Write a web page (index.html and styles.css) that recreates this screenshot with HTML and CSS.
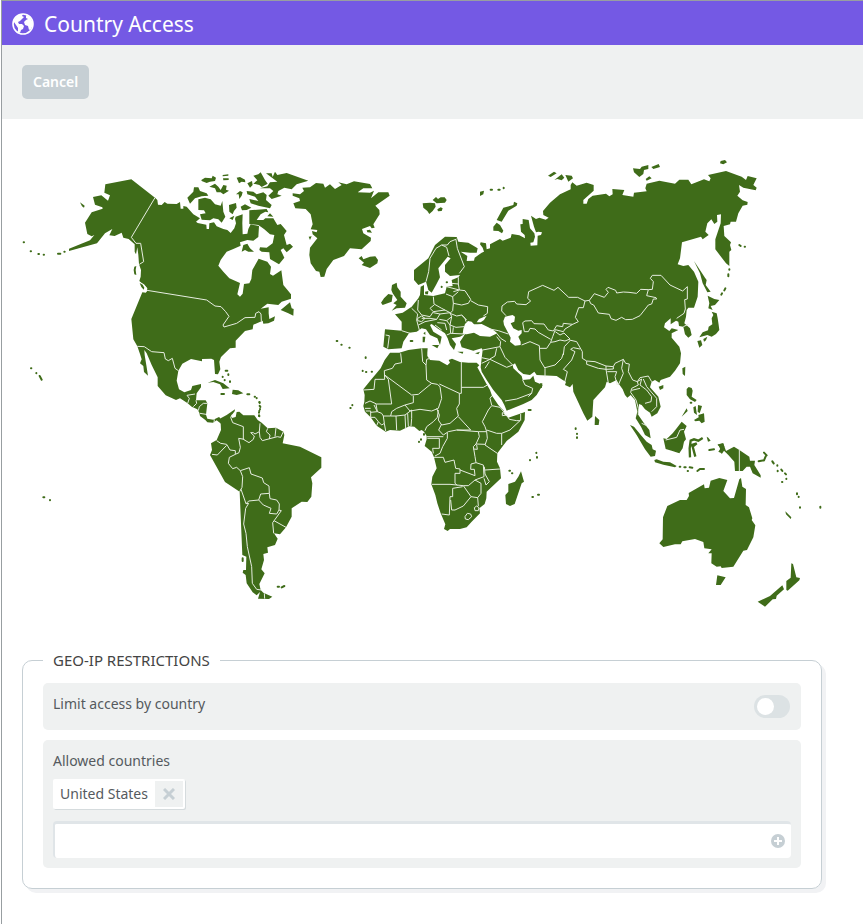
FILE: index.html
```html
<!DOCTYPE html>
<html lang="en">
<head>
    <meta charset="UTF-8">
    <meta name="viewport" content="width=device-width, initial-scale=1.0">
    <title>Country Access</title>
    <link rel="stylesheet" href="styles.css">
</head>
<body>

<div class="page">
    <header class="title-bar">
        <svg class="globe" viewBox="0 0 22 22" aria-hidden="true">
            <circle cx="11" cy="11" r="10" fill="none" stroke="#fff" stroke-width="1.6"/>
            <path d="M2 7 6 2 11 1 10 3 12 4 10 6 8 8 6 9 7 11 10 11 12 13 11 16 9 17 8 20 6 19 6 15 4 12 2 9Z" fill="#fff"/>
            <path d="M14 2 18 4 20 8 21 12 19 16 17 17 16 13 13 12 12 9 14 7 16 6 14 5Z" fill="#fff"/>
        </svg>
        <h1>Country Access</h1>
    </header>

    <div class="toolbar">
        <button type="button" class="cancel-btn">Cancel</button>
    </div>

    <main>
        <svg class="map" viewBox="66 357 2400 1560" role="img" aria-label="World map">
            <!-- North America -->
            <g transform="translate(60 465)">
                <path d="M147 281 210 256 223 240 215 244 202 237 195 203 215 172 248 161 247 157 225 149 219 126 244 121 264 137 270 121 253 113 256 88 334 73 405 128 412 135 414 149 425 150 434 141 442 146 470 147 480 141 482 161 490 161 490 153 500 155 520 178 540 190 528 200 533 204 559 209 560 222 567 222 568 205 582 202 590 214 610 222 622 225 632 234 643 220 648 205 645 192 647 185 668 178 667 205 668 238 682 236 685 222 692 208 717 213 715 246 700 257 682 255 660 262 662 272 640 282 620 290 602 315 595 332 610 350 628 370 660 384 652 418 660 425 668 416 672 387 688 385 694 372 697 345 716 311 742 320 753 335 750 357 759 362 784 346 790 390 813 418 813 431 785 440 775 450 742 446 722 461 746 457 746 475 748 492 765 484 762 497 745 505 730 506 728 497 700 509 698 523 675 528 647 557 647 578 630 580 603 606 598 620 601 643 594 658 585 657 584 643 582 615 574 611 546 612 546 619 513 612 487 626 475 647 470 677 477 703 493 712 513 705 517 693 543 687 543 697 530 715 528 736 557 736 562 745 558 779 562 791 580 794 597 786 606 794 603 806 590 796 579 803 562 802 556 795 540 783 538 773 532 763 515 755 503 745 480 730 468 735 437 721 413 693 413 667 395 630 380 595 373 585 374 600 380 637 384 662 372 651 370 633 360 625 365 613 360 597 352 574 340 553 334 492 367 412 378 413 381 400 372 391 358 378 362 365 363 345 357 327 355 300 352 277 348 298 344 290 344 268 326 252 310 248 305 233 284 243 268 241 277 222 255 235 231 265 147 288Z"/>
                <path class="borders" d="M405 128 334 247 348 265 362 265 371 320 358 328M381 406 560 435 585 453 603 455 617 470 627 484 609 510 612 516 650 505 675 488 705 487 707 475 717 470 723 477 724 498M352 574 373 575 395 590 432 593 436 612 445 617 457 610 465 640 475 647M503 745 508 730 501 721 525 717M520 755 530 745 528 736M535 767 538 755 550 745 562 745M540 775 558 778M583 793 582 803"/>
                <path class="sea" d="M358 380 372 388 382 400 380 411 374 410 372 398 360 387Z"/>
                <path d="M343 335 349 333 347 345 349 360 343 358 341 345ZM180 142 194 152 192 158 186 154ZM359 384 368 389 373 398 371 404 364 396Z"/>
                <path class="islets" d="M11 262h1M32 289h1M55 297h2M71 299h1M114 296h7M133 290h1"/>
            </g>
            <!-- Arctic archipelago, Greenland, Iceland -->
            <g transform="translate(570 465)">
                <path d="M178 166 230 162 235 172 226 170 212 178 200 195 220 195 226 190 250 190 262 210 272 207 290 228 282 240 290 270 300 266 309 275 290 292 280 280 272 285 283 308 267 328 240 312 238 292 215 290 208 285 210 277 230 278 248 265 253 240 240 238 222 222 205 210 178 207Z"/>
                <path d="M25 133 45 128 62 133 75 148 92 152 97 138 100 170 106 185 95 203 85 193 70 190 60 196 35 194 30 178 47 175 42 166 25 165ZM-8 128 10 110 12 97 25 97 30 108 50 115 55 122 35 124 15 130 0 146ZM34 75 45 68 65 70 68 62 78 68 75 78 60 80 50 84 35 78ZM58 95 75 86 85 95 92 105 100 90 110 92 108 104 117 107 100 118 92 112 80 112 75 100ZM98 60 115 58 115 62 98 64ZM99 70 116 70 116 75 100 76ZM140 68 150 66 165 74 166 82 155 80 147 85ZM117 150 138 144 140 158 132 168 128 178 118 170ZM152 155 165 148 184 158 170 165 156 166ZM138 118 150 108 158 112 155 122 148 132 146 118ZM172 85 186 78 188 90 180 98ZM190 62 205 58 212 52 225 75 233 86 215 96 208 90 190 86 202 76ZM170 108 190 110 200 118 220 112 230 120 228 135 245 150 240 160 205 152 182 145 178 132 205 138 195 125 172 118ZM228 55 245 55 248 66 255 50 262 60 290 54 355 77 320 88 305 103 283 98 265 108 262 118 275 122 245 132 235 122 250 108 240 100 210 100 232 94 240 82 262 80ZM240 175 250 185 232 184ZM155 290 160 270 172 266 180 280 192 290 175 290 165 285ZM118 190 133 182 128 195ZM272 465 300 442 305 460 311 462 310 482 295 475Z"/>
                <path d="M337 98 360 97 378 84 400 86 405 98 420 88 435 102 455 90 445 82 470 88 492 79 540 87 547 100 520 100 503 112 540 113 552 107 543 130 565 112 595 112 599 122 556 152 568 165 569 178 550 208 554 218 545 220 540 213 516 222 520 235 543 248 542 258 515 283 480 280 462 303 430 315 410 342 403 365 392 366 388 350 378 348 362 325 358 300 360 278 382 250 368 238 366 228 380 232 382 225 362 223 368 208 362 178 347 162 316 160 310 145 330 138 328 130 308 122 308 115 330 118 342 108ZM530 226 540 224 546 233 532 232ZM356 245 365 244 360 255ZM506 310 515 303 520 313 540 305 556 304 564 315 562 325 540 339 515 330 522 323Z"/>
            </g>
            <!-- Caribbean -->
            <g transform="translate(360 840)">
                <path d="M263 308 285 300 310 310 329 325 308 327 300 313 280 306ZM338 329 355 331 370 340 350 345 336 342Z"/>
                <path class="islets" d="M304 342h8M382 343h6M308 290v1M317 272h5M325 283v2M314 300v1M330 304v2M404 350h1M410 354v1M418 366v1M419 377v1M420 387v1M417 397v1M418 407v2"/>
            </g>
            <!-- South America -->
            <g transform="translate(600 1200)">
                <path d="M62 55 80 45 105 28 104 34 93 48 96 54 107 51 110 36 118 35 130 46 163 46 173 60 185 68 203 85 228 83 250 95 253 105 248 130 300 140 364 172 364 203 333 232 337 250 334 290 322 306 305 305 275 325 275 350 258 382 240 403 222 400 233 416 225 435 202 442 204 458 190 462 192 480 184 508 194 520 178 552 182 570 190 578 217 590 207 597 174 596 180 576 170 586 158 577 140 550 137 525 128 518 130 510 138 510 139 470 127 465 119 275 75 246 30 165 36 150 33 130 50 120 63 90 62 70Z"/>
                <path class="borders" d="M119 275 126 262 128 230 121 212M123 268 138 311 146 310 137 325 131 372 138 400 142 440 155 500 157 550 170 568 184 570M121 212 148 203 153 222 187 234 191 248 207 258 208 280 182 282 176 300 146 303 138 311M208 280 210 296 230 300 238 312 237 330 230 342 208 340 213 325 190 315 176 300M237 330 244 332 218 368 221 400M222 362 258 382M121 212 110 202 98 206 85 190 88 172 106 163 117 158 121 142 116 115 133 118M50 122 62 130 80 133 90 150 106 152 106 163M80 136 52 165 36 163M98 42 92 52 98 68 130 80 130 118 147 128 160 118 163 108 152 98 160 98 165 102 178 95 180 70M178 95 180 112 187 122 232 110 242 112 250 95M203 85 199 95 210 105 208 117M228 83 225 110M193 580 194 596"/>
                <path class="islets" d="M128 475v8M233 560h4M245 562l8-4M179 7v2M181 20v1M178 32v1M177 46v2"/>
            </g>
            <!-- Europe and Asia -->
            <g transform="translate(1440 465)">
                <path d="M-70 246-65 260-35 263-7 280-10 293-30 293-58 290-38 303-40 318-18 317-16 308 5 293 12 290 8 278 0 268 2 262 18 265 20 283 30 280 30 268 60 252 68 257 92 248 95 237 118 241 135 250 134 240 123 230 121 208 128 207 128 192 146 195 150 220 163 235 165 245 160 262 151 263 152 272 172 271 173 242 183 240 186 232 175 230 168 232 162 215 153 182 168 192 178 188 197 194 206 188 190 180 189 168 210 143 240 118 272 103 272 90 277 82 290 92 320 83 341 90 341 107 310 135 310 146 320 146 325 132 338 122 378 116 388 124 398 118 397 102 433 105 427 120 460 125 462 113 500 109 496 100 500 86 538 77 585 86 598 74 625 74 634 88 672 73 688 79 692 70 684 60 738 48 785 65 798 75 803 63 830 70 820 90 830 98 827 106 790 98 777 90 780 110 772 122 788 136 803 141 802 149 788 152 775 175 768 200 752 200 750 208 731 213 733 243 753 262 750 270 754 285 748 290 748 333 738 325 706 283 706 253 722 205 723 178 711 180 712 200 703 207 694 193 682 205 676 230 686 240 668 253 663 245 606 262 600 310 593 328 610 333 625 330 642 350 655 380 653 425 642 458 625 458 620 465 618 485 613 505 630 520 635 540 625 548 615 538 610 515 597 513 595 500 588 497 572 508 572 490 555 505 552 517 568 528 575 520 595 525 575 535 575 548 598 575 603 595 600 625 585 647 570 665 542 675 538 683 525 675 515 680 510 697 535 725 542 755 532 775 515 785 510 773 495 763 485 750 477 747 475 780 492 805 508 825 512 850 495 840 483 815 467 790 472 770 465 735 452 720 442 728 435 720 428 703 415 685 410 675 390 685 380 680 375 697 340 735 337 785 322 797 310 775 280 710 278 687 270 697 255 690 258 680 248 675 230 663 170 660 163 650 150 660 130 657 115 645 105 625 98 630 100 640 125 663 128 675 150 673 160 662 165 680 188 690 170 720 155 735 130 747 80 767 73 750 65 735 40 705 20 675 5 650 2 637 5 610 8 585 5 580-20 587-35 583-55 577-60 560-50 545-45 537-60 545-85 550-72 567-78 585-90 570-97 550-105 535-128 520-145 507-150 510-140 530-115 545-120 570-128 550-150 540-162 523-175 520-190 530-212 533-230 560-235 580-275 583-290 575-285 523-235 527-235 500-255 478-232 473-205 455-185 430-180 420-178 395-168 390-168 420-140 423-105 415-100 395-82 393-85 375-65 367-60 360-90 363-105 350-105 330-88 310-97 305-125 340-120 367-132 390-145 413-155 405-162 380-185 390-198 375-198 345-155 310-135 270-105 245Z"/>
                <path class="sea" d="M-52 537-50 522-45 507-36 498-25 500-18 508-8 508 5 507 25 517 40 525 52 535 30 545 0 543-18 533-40 538ZM-3 492 20 482 12 495 2 502-10 502ZM75 485 98 480 105 485 103 500 92 505 100 520 115 527 125 525 125 535 115 545 122 560 122 570 105 572 90 560 92 548 85 535 72 510 70 498Z"/>
                <path class="borders" d="M78 482 65 468 66 453 82 441 104 439 110 447 138 449 152 438 143 430 146 410 188 391 222 406 234 397 266 427 293 427 315 438 328 436M315 438 310 458 296 458 286 487 295 500 278 508 250 505 248 515 230 512 220 528 205 525 192 507 162 506 155 497 135 498 128 503 133 530 145 530 150 520 165 522 175 532 212 553M125 570 150 560 178 572 180 615M178 580 200 580 212 562 218 545 226 524 250 530 255 522 278 508M226 530 240 540 252 534 270 552 255 558 240 555 225 560 212 562M250 600 253 575 270 557M328 436 343 416 373 427 385 412 378 403 384 397 407 406 410 414 430 411 447 412 470 415 482 403 505 404 500 422 528 428 530 432 520 432 515 447 505 450 480 482 457 493 437 494 425 487 408 496 393 491 388 478 355 474 341 450 332 446 328 436M505 404 517 403 520 380 511 370 517 361 543 361 570 390 608 408 622 395 622 432 614 434 616 462 612 475 590 490M610 515 625 508M268 555 290 560 307 590 307 610 320 618 345 620 378 633 400 635 405 625 430 613 437 625 448 627 445 650 458 675 472 680M320 618 320 628 355 640 378 643 378 633M400 635 400 642 378 643 385 685M382 650 410 650 405 665 412 690M430 613 425 640 430 655 415 690M472 680 475 690 455 700 452 712 468 735 475 760 475 780M472 680 485 672 480 690 500 705 515 725 513 740 495 745M472 680 480 668 505 663 515 680M490 672 500 695 530 730 530 755 515 770M455 706 480 700M485 805 500 812M195 665 195 640 180 615M195 638 225 630 245 610 250 595M255 678 262 650 250 643 275 615 285 590 272 583 280 578 300 582M8 585 60 575 75 607 98 630M60 575 62 560 50 545M30 522 55 527 85 537M50 535 62 550 78 560M50 580 45 603 28 613 5 608M5 625 30 613 80 637 98 630M15 640 28 620M75 738 110 732 155 715 158 700 135 690 128 675M155 715 145 725M-162 380-154 350-150 310-132 280-115 270-98 270-90 260-70 252M-115 270-100 277-93 303M-72 255-68 280-47 335-62 355M-65 367-65 387-85 385M-65 387-62 405-80 410M-100 395-62 405-45 407-28 433-35 445-55 450-80 445-82 425-102 417M-82 425-65 410M-28 437-5 450 23 455 22 475 10 483M-80 445-82 467-90 475-70 483-55 480-40 495M-140 425-138 447-115 460-90 473M-185 435-187 465-175 480-150 485-140 470-150 460-138 450M-140 470-105 465M-175 490-150 490-130 493-120 477-140 473M-187 490-175 483-165 490-175 500-187 497ZM-120 477-90 473-85 485-100 497-122 493M-85 485-90 510-72 517-48 515M-128 503-105 505-100 525M-135 510-115 525M-100 497-90 510-88 535-100 540M-88 535-45 537M-80 517-82 535M-235 527-210 535M-205 460-187 477-190 495-182 525M-283 540-272 542-277 580M-185 510-165 500-130 493M-55 480-45 490-42 500"/>
                <!-- British Isles, Svalbard, Mediterranean -->
                <path d="M-264 390-250 383-248 397-238 410-238 425-220 445-225 458-250 460-265 467-250 450-260 445-248 435-262 415-266 405ZM-288 430-275 417-262 420-265 440-292 450-297 443ZM-172 145-150 143-135 145-133 155-142 168-152 177-158 168-170 158ZM-142 135-132 126-126 132-118 127-106 127-100 135-105 143-130 145ZM-128 163-118 157-112 160-115 168-126 169ZM-170 535-164 530-164 540ZM-172 545-164 545-166 562-172 562ZM-145 570-123 570-128 580ZM-68 590-50 590-52 596ZM-15 595 0 590-5 598ZM-165 410-155 408-156 418-164 418Z"/>
                <!-- Russian Arctic islands -->
                <path d="M50 195 70 158 100 150 102 140 112 145 110 152 85 167 65 200ZM40 215 50 203 60 210 70 227 66 235 55 228 40 227ZM0 110 12 107 10 118 0 123ZM204 62 222 50 230 55 212 66ZM223 75 245 58 253 68 245 76 232 72ZM256 60 275 62 279 70 265 80ZM459 40 480 42 485 35 505 30 505 42 492 45 490 57 478 66 462 52ZM514 36 536 27 540 36 520 42ZM497 72 508 64 515 70 500 77ZM722 18 735 15 741 22 730 28 720 25Z"/>
                <path class="islets" d="M32 104h4M55 104h4M71 98v2M-100 382h1M-115 395v1M-208 558h5"/>
            </g>
            <!-- Russian Far East and Japan -->
            <g transform="translate(1860 465)">
                <path d="M222 318 255 368 260 375 257 390 272 410 262 412 248 385 240 355ZM263 422 283 432 298 435 285 450 272 453 278 465 265 460 268 445ZM275 470 290 475 293 490 296 510 298 525 288 537 275 545 262 540 238 547 248 532 264 526 266 515 277 508 275 490 280 480ZM232 558 243 556 247 570 238 578ZM250 552 262 545 258 556 252 560Z"/>
                <path class="islets" d="M328 343v1M325 358v6M316 400l-3 6M306 415l-2 4M358 270l4 3M374 275h1"/>
            </g>
            <!-- South-east Asia -->
            <g transform="translate(1620 900)">
                <path d="M427 205 436 200 435 228 428 222ZM356 260 370 255 370 265 360 270ZM165 348 178 360 176 375 164 375ZM0 250 7 250 6 263 0 265ZM440 267 446 261 455 264 458 272 455 290 470 300 465 306 450 298 440 285ZM462 360 476 352 475 345 492 340 494 365 485 370 478 362 466 364ZM425 350 440 325 443 333ZM460 322 467 318 471 345 462 338ZM474 315 486 318 484 325 479 340 473 335ZM370 415 380 417 398 400 410 385 425 365 440 378 432 395 438 418 432 425 428 445 418 460 395 452 377 447ZM270 375 282 380 305 408 320 425 335 435 338 448 348 452 345 468 332 470 315 448 300 422 290 405ZM343 480 350 478 370 485 390 487 410 498 405 502 370 494 345 487ZM500 410 505 413 512 422 504 425ZM532 434 549 430 553 440 545 460 535 455 543 443Z"/>
                <path class="borders" d="M377 420 410 412 420 390 432 388"/>
                <path class="sulawesi" d="M450 472 449 445 452 422 462 418 475 422 488 414M452 436 470 430 458 440 466 470"/>
                <path class="islets" d="M107 385v2M111 401v1M111 412v2M508 450l14-2M419 500h2M433 502h4M449 502l8 1M443 513h1M472 513l8-6 12 0M452 308h2"/>
            </g>
            <!-- Oceania -->
            <g transform="translate(1860 1260)">
                <path d="M294 73 310 70 315 85 318 93 342 80 358 90 388 110 390 122 405 122 403 135 422 166 422 173 398 160 390 140 380 140 368 153 345 153 343 125 325 105 312 92 305 103 302 90Z"/>
                <path d="M129 292 142 258 180 240 200 240 207 228 206 219 252 193 254 205 267 203 272 182 298 174 322 180 310 213 330 235 342 234 358 178 363 174 367 200 378 207 377 255 387 262 397 295 395 300 406 316 400 352 381 390 370 392 340 440 305 444 302 439 290 440 274 430 275 400 265 400 275 388 253 385 250 366 225 357 187 364 182 373 165 373 130 381 118 370 128 358ZM292 466 317 472 302 495 288 495ZM514 430 519 432 529 472 540 474 538 481 503 512 499 510 499 483 512 473ZM487 496 492 508 470 527 468 537 458 538 435 560 413 545 450 528ZM496 274 514 292 512 297 498 283Z"/>
                <path class="borders" d="M358 88V154"/>
                <path class="islets" d="M416 124l16-3 5-12M432 98l8 8M457 124l4 6M472 136v1M473 152v2M484 149l3 4M495 160l3 3M499 176v1M486 186h1M531 220v3M536 230v1M540 262v1M601 260v3"/>
            </g>
            <!-- Africa -->
            <g transform="translate(1050 990)">
                <path d="M120 68 148 68 175 60 215 55 233 55 232 68 232 78 240 90 268 92 292 106 300 98 296 90 306 86 330 96 355 98 380 98 388 106 382 112 391 128 410 163 420 180 426 197 445 225 462 243 462 252 475 263 525 246 524 270 505 305 470 333 442 370 441 395 450 415 453 445 410 485 409 505 404 522 388 535 390 550 365 575 350 592 330 597 300 597 293 603 282 597 286 583 272 550 262 520 256 495 244 463 247 440 260 415 252 382 245 365 224 348 230 328 230 318 222 305 215 300 208 303 193 290 178 289 150 302 120 300 107 305 80 287 62 262 45 245 40 228 43 215 44 195 40 178 60 153 92 115 104 90ZM513 424 522 455 515 460 494 522 480 528 468 522 466 495 475 485 475 462 495 455 505 440Z"/>
                <path class="borders" d="M152 70 155 98 135 102 127 115 103 122 104 148 75 148 72 178 40 180M104 135 185 195 205 193 245 160 230 150 228 105 218 95 215 55M228 105 230 88 240 85M115 148 125 222 80 222 60 213 45 220M190 197 190 218 165 225 140 235 125 245 122 258 100 258 95 250 82 245 78 222M165 225 180 243 210 238 245 243 265 235 275 205 270 170 262 163 245 160M115 148 104 135M268 162 328 190 334 190 334 95M334 172 400 172 412 165M328 190 328 222 320 235 325 258 300 280 275 285 265 270 268 255 260 235M265 240 262 262 250 275 230 290 225 302M275 282 266 300 280 315 295 305 320 300 362 300 325 260M230 320 280 320M292 308 292 325 278 350 270 370 255 378M232 325 268 325 268 355 248 355 250 370M320 300 385 305 388 320 378 342 370 350 375 380 378 398M385 305 410 305 405 290 397 275 415 240 425 227 450 232 465 250M410 305 412 325 405 345 442 370M405 343 378 342M370 357 382 358 380 345M425 225 420 205 426 197M465 250 457 248 457 257 470 255 478 268 500 272 510 272 480 300 455 310 440 310 410 300M512 272 512 252M455 310 455 345M252 382 280 382 285 397 312 390 317 415 330 417 330 430 315 430 315 460 322 466M246 463 300 463 340 467M330 420 375 437 373 418 362 418 363 402 378 398 400 405 402 440 375 450 355 467 340 467 363 500 383 503 393 490 393 460 375 450M403 410 405 432 418 455 408 465 402 445M405 420 450 417M338 470 308 475 308 500 300 500 298 555 275 552M302 510 305 540 315 540 340 528 363 500M383 503 385 528M345 560 352 550 362 552 365 560 355 569 346 567ZM373 533 380 528 387 533 385 542 375 542ZM72 225 82 245 62 247M45 235 62 235M47 243 62 243 62 262 75 262 85 275 95 285 103 280 100 258M85 275 80 287M103 280 107 303M138 258 140 300M122 258 138 258 165 255 167 295M173 250 175 290M165 255 185 240 185 265 183 288"/>
                <path class="islets" d="M47 82v2M38 122v1M48 126h1M65 125h1M7 225v1M1 234h1M222 312v2M213 328v1M207 335v1M540 390v1M559 368v1M561 381v2M478 422h2M486 430h1M547 501h2M564 494h3M536 240h6"/>
            </g>
            <!-- Pacific -->
            <path class="islets" d="M93 1105h1M109 1119v1M119 1128l6 11M130 1492h3M150 1500v1M1010 1023h2M1024 1034h1M1048 1043h1"/>
        </svg>

        <fieldset class="restrictions">
            <legend>GEO-IP RESTRICTIONS</legend>

            <div class="row toggle-row">
                <label for="limitAccess">Limit access by country</label>
                <input type="checkbox" id="limitAccess" class="toggle">
            </div>

            <div class="row">
                <label for="countrySearch">Allowed countries</label>
                <div class="tag">
                    <span>United States</span>
                    <button type="button" aria-label="Remove United States">
                        <svg viewBox="0 0 12 12" aria-hidden="true"><path d="M1 1 11 11M11 1 1 11" stroke="#c6cfd4" stroke-width="3"/></svg>
                    </button>
                </div>
                <div class="search">
                    <input type="text" id="countrySearch">
                    <button type="button" aria-label="Add country">
                        <svg viewBox="0 0 14 14" aria-hidden="true">
                            <circle cx="7" cy="7" r="7" fill="#c6cfd4"/>
                            <path d="M7 3V11M3 7H11" stroke="#fff" stroke-width="2"/>
                        </svg>
                    </button>
                </div>
            </div>
        </fieldset>
    </main>
</div>

</body>
</html>
```

FILE: styles.css
```css
* { box-sizing: border-box; }
body { font-family: "Noto Sans", sans-serif; font-size: 14px; line-height: 20px; background-color: #fff; color: #555a5e; margin: 0; }
.page { min-height: 100vh; margin-left: 1px; border-left: 1px solid #989ea1; border-top: 1px solid #989ea1; }
.title-bar { display: flex; align-items: center; gap: 10px; height: 44px; padding: 2px 10px 0; background-color: #7459e4; color: #fff; }
.globe { width: 22px; height: 22px; }
h1 { margin: 0; font-size: 21px; line-height: 30px; font-weight: 400; }
.toolbar { padding: 20px; background-color: #eff1f1; }
button { border: none; font-family: inherit; cursor: pointer; }
.cancel-btn { display: block; height: 34px; padding: 0 11px 2px; border-radius: 5px; background-color: #c6cfd4; color: #fff; font-size: 14px; font-weight: 600; }
main { padding: 0 41px 32px 20px; }

.map { display: block; width: 100%; height: auto; margin-bottom: 11px; fill: #3f6c19; }
.map .sea { fill: #fff; }
.map .borders { fill: none; stroke: #e6ede0; stroke-width: 3; stroke-linejoin: round; }
.map .islets { fill: none; stroke: #3f6c19; stroke-width: 6; stroke-linecap: round; }
.map .sulawesi { fill: none; stroke: #3f6c19; stroke-width: 7; }

.restrictions { min-width: 0; margin: 0; padding: 13px 20px 20px; border: 1px solid #c6cfd4; border-radius: 10px; box-shadow: 4px 4px 0 #f1f2f4; }
legend { padding: 0 10px; font-size: 15px; color: #444; }
.row { padding: 11px 10px 10px; border-radius: 5px; background-color: #eff1f1; }
.row label { display: block; }
.row + .row { margin-top: 10px; }
.toggle-row { display: flex; justify-content: space-between; min-height: 47px; }
.toggle { appearance: none; display: flex; align-items: center; width: 36px; height: 23px; margin: 1px; padding: 3px; border-radius: 12px; background-color: #dce2e4; cursor: pointer; }
.toggle::before { content: ""; width: 17px; height: 17px; border-radius: 50%; background-color: #fff; }
.toggle:checked { justify-content: flex-end; background-color: #7459e4; }
.tag { display: flex; align-items: center; gap: 7px; width: max-content; height: 30px; margin: 8px 0 12px; padding: 2px 2px 2px 7px; border-radius: 2px; background-color: #fff; box-shadow: 1px 1px 0 #d5dbdd; }
.tag button { display: flex; align-items: center; justify-content: center; width: 28px; height: 26px; padding: 0; background-color: #eff1f1; }
.tag svg { width: 12px; height: 12px; }
.search { display: flex; align-items: center; height: 37px; padding-right: 6px; border-top: 3px solid #e0e5e8; border-left: 2px solid #e0e5e8; border-radius: 4px; background-color: #fff; }
.search input { flex: 1; min-width: 0; height: 100%; padding: 0 8px; border: none; outline: none; background: none; font: inherit; color: inherit; }
.search button { display: flex; padding: 0; background: none; }
.search svg { width: 14px; height: 14px; }
```
